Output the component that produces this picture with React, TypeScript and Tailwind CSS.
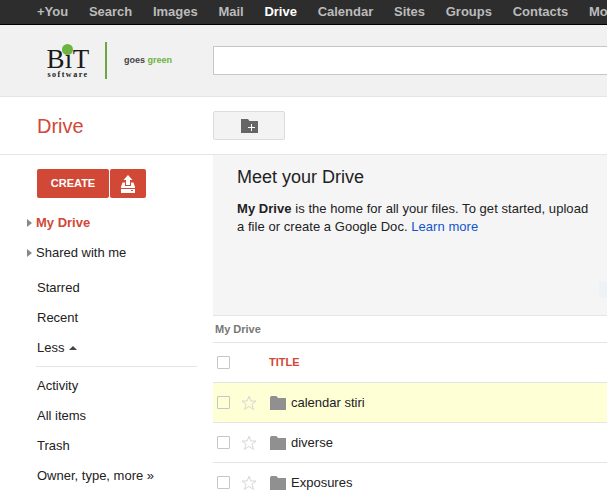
const navItems = ['+You', 'Search', 'Images', 'Mail', 'Drive', 'Calendar', 'Sites', 'Groups', 'Contacts', 'More'];

const files = ['calendar stiri', 'diverse', 'Exposures'];

function FolderIcon() {
  return (
    <svg width="16" height="14" viewBox="0 0 16 14" className="shrink-0">
      <path d="M0 1.500 1 0h5.500L8 2h8v12H0z" fill="#909090" />
    </svg>
  );
}

function Star() {
  return (
    <svg width="16" height="16" viewBox="0 0 16 16" className="shrink-0">
      <path
        d="M8 1.2 9.9 6h5.2l-4.2 3.2 1.6 5.3L8 11.4l-4.5 3.1 1.6-5.3L.9 6h5.2z"
        fill="none"
        stroke="#d6d6d6"
        strokeWidth="1"
      />
    </svg>
  );
}

function Caret() {
  return <span className="absolute left-[27px] top-[5px] border-y-[4px] border-l-[5px] border-y-transparent border-l-[#888]" />;
}

function Checkbox() {
  return <span className="block size-[13px] shrink-0 rounded-[1px] border border-[#c6c6c6] bg-transparent" />;
}

export default function App() {
  return (
    <div className="h-[497px] w-[607px] overflow-hidden bg-white font-['Liberation_Sans',Arial,sans-serif] text-[13px] text-[#222]">
      {/* black bar */}
      <div className="flex h-[25px] items-center gap-[20.7px] whitespace-nowrap border-b border-black bg-[#2d2d2d] pl-[37px] text-[13px] font-bold text-[#bbb]">
        {navItems.map((item) => (
          <span key={item} className={item === 'Drive' ? 'text-white' : ''}>
            {item}
          </span>
        ))}
      </div>

      {/* logo + search */}
      <div className="flex h-[72px] items-center border-b border-[#e5e5e5] bg-[#f1f1f1]">
        <div className="flex w-[213px] shrink-0 items-center pl-[46px]">
          <div className="relative w-[44px] pt-[6px] text-center font-['Liberation_Serif',serif] leading-none text-[#1a1a1a]">
            <span className="absolute left-[16px] top-px size-[11px] rounded-full bg-[#6cb33f]" />
            <div className="text-[27px] leading-[21px] tracking-[0.4px]">BiT</div>
            <div className="mt-px whitespace-nowrap text-[8px] font-bold leading-[7px] tracking-[1.5px]">software</div>
          </div>
          <span className="ml-[15px] h-[37px] w-[2px] bg-[#6ba544]" />
          <span className="ml-[17px] whitespace-nowrap text-[9px] font-bold text-[#444]">
            goes <span className="text-[#6cb33f]">green</span>
          </span>
        </div>
        <div className="h-[29px] flex-1 border border-r-0 border-[#c6c6c6] bg-white" />
      </div>

      {/* drive title + new folder */}
      <div className="flex h-[58px] items-center border-b border-[#e5e5e5]">
        <div className="w-[213px] shrink-0 pl-[37px] text-[20px] text-[#d14836]">Drive</div>
        <div className="flex h-[29px] w-[72px] items-center justify-center rounded-[2px] border border-[#dcdcdc] bg-[#f3f3f3]">
          <svg width="17" height="14" viewBox="0 0 17 14">
            <path d="M0 0h7l1.500 2H17v12H0z" fill="#666" />
            <path d="M7 8.500h7M10.500 5v7" stroke="#fff" strokeWidth="1" />
          </svg>
        </div>
      </div>

      <div className="flex">
        {/* sidebar */}
        <div className="w-[213px] shrink-0 pt-[14px]">
          <div className="ml-[37px] flex h-[29px] gap-px">
            <div className="flex w-[72px] items-center justify-center rounded-[2px] bg-[#d14836] text-[11px] font-bold text-white">
              CREATE
            </div>
            <div className="flex w-[36px] items-center justify-center rounded-[2px] bg-[#d14836]">
              <svg width="14" height="18" viewBox="0 0 14 18">
                <path d="M7 0l4.500 5H9v5H5V5H2.500z" fill="#fff" />
                <path d="M1.500 7.500H4V11h6V7.500h2.500L14 12v6H0v-6z" fill="#fff" />
                <path d="M0 13.500h14" stroke="#d14836" strokeWidth="1" />
                <path d="M10 15.500h2" stroke="#d14836" strokeWidth="1" />
              </svg>
            </div>
          </div>

          <div className="relative mt-[16px] pl-[36px] leading-[18px] font-bold text-[#d14836]">
            <Caret />
            My Drive
          </div>
          <div className="relative mt-[12px] pl-[36px] leading-[18px]">
            <Caret />
            Shared with me
          </div>

          <div className="mt-[17px] flex flex-col gap-[12px] pl-[37px] leading-[18px]">
            <span>Starred</span>
            <span>Recent</span>
            <span className="flex items-center gap-[5px]">
              Less
              <span className="border-x-[4px] border-b-[4px] border-x-transparent border-b-[#444]" />
            </span>
          </div>
          <div className="mb-[10px] ml-[36px] mr-[16px] mt-[9px] border-t border-[#e5e5e5]" />
          <div className="flex flex-col gap-[12px] pl-[37px] leading-[18px]">
            <span>Activity</span>
            <span>All items</span>
            <span>Trash</span>
            <span>Owner, type, more »</span>
          </div>
        </div>

        {/* main column */}
        <div className="min-w-0 flex-1">
          <div className="relative h-[161px] border-b border-[#e5e5e5] bg-[#f5f5f5] pl-[24px] pt-[12px]">
            <div className="text-[18px] leading-[21px] text-[#222]">Meet your Drive</div>
            <p className="mt-[12px] w-[356px] text-[13px] leading-[18px] tracking-[0.05px]">
              <b>My Drive</b> is the home for all your files. To get started, upload a file or create a Google Doc.{' '}
              <span className="text-[#15c]">Learn more</span>
            </p>
            <span className="absolute right-0 top-[127px] h-[16px] w-[8px] bg-[#eef1f6]" />
          </div>

          <div className="flex h-[27px] items-center border-b border-[#e5e5e5] pl-[2px] text-[11px] font-bold text-[#777]">
            My Drive
          </div>

          <div className="flex h-[40px] items-center border-b border-[#e5e5e5] pl-[4px]">
            <Checkbox />
            <span className="ml-[39px] text-[11px] font-bold text-[#d14836]">TITLE</span>
          </div>

          {files.map((name, i) => (
            <div
              key={name}
              className={`flex h-[40px] items-center border-b border-[#e5e5e5] pl-[4px] ${i === 0 ? 'bg-[#ffffd6]' : ''}`}
            >
              <Checkbox />
              <span className="ml-[11px]">
                <Star />
              </span>
              <span className="ml-[13px]">
                <FolderIcon />
              </span>
              <span className="ml-[5px]">{name}</span>
            </div>
          ))}
        </div>
      </div>
    </div>
  );
}
